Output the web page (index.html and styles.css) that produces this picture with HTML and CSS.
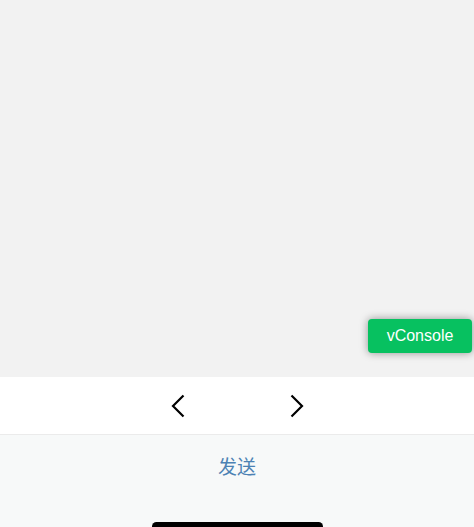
FILE: index.html
```html
<!DOCTYPE html>
<html lang="zh">
<head>
  <meta charset="UTF-8" />
  <meta name="viewport" content="width=device-width, initial-scale=1" />
  <title>发送</title>
  <link rel="stylesheet" href="styles.css">
</head>
<body>

<main class="content"></main>

<nav class="nav-bar">
  <button class="nav-btn" aria-label="back">
    <svg width="14" height="24" viewBox="0 0 14 24"><path d="M12.5 1.5 L2 12 L12.5 22.5" fill="none" stroke="#000" stroke-width="2.2"/></svg>
  </button>
  <button class="nav-btn" aria-label="forward">
    <svg width="14" height="24" viewBox="0 0 14 24"><path d="M1.5 1.5 L12 12 L1.5 22.5" fill="none" stroke="#000" stroke-width="2.2"/></svg>
  </button>
</nav>

<footer class="send-bar">
  <span class="send-text">发送</span>
  <div class="home-indicator"></div>
</footer>

<div class="vconsole-btn">vConsole</div>

</body>
</html>
```

FILE: styles.css
```css
  html, body {
    height: 100%;
  }
  body {
    margin: 0;
    font-family: "Liberation Sans", "Noto Sans CJK SC", sans-serif;
    display: flex;
    flex-direction: column;
    background: #f2f2f2;
  }
  .content {
    flex-grow: 1;
    background: #f2f2f2;
  }
  .nav-bar {
    height: 57px;
    background: #fff;
    border-bottom: 1px solid #ebebeb;
    display: flex;
    justify-content: center;
    align-items: center;
    gap: 105px;
  }
  .nav-btn {
    background: none;
    border: none;
    padding: 0;
    display: flex;
    margin-top: 1px;
  }
  .send-bar {
    height: 92px;
    background: #f7f9f9;
    position: relative;
    display: flex;
    justify-content: center;
  }
  .send-text {
    margin-top: 17px;
    font-size: 19px;
    color: #4c82b4;
    font-family: "Noto Sans CJK SC", sans-serif;
  }
  .home-indicator {
    position: absolute;
    left: 152px;
    bottom: -4px;
    width: 171px;
    height: 9px;
    background: #000;
    border-radius: 5px;
  }
  .vconsole-btn {
    position: absolute;
    left: 368px;
    top: 319px;
    width: 104px;
    height: 34px;
    background: #07c160;
    color: #fff;
    font-size: 16px;
    border-radius: 4px;
    box-shadow: 0 0 8px rgba(0,0,0,0.4);
    display: flex;
    justify-content: center;
    align-items: center;
  }
```
